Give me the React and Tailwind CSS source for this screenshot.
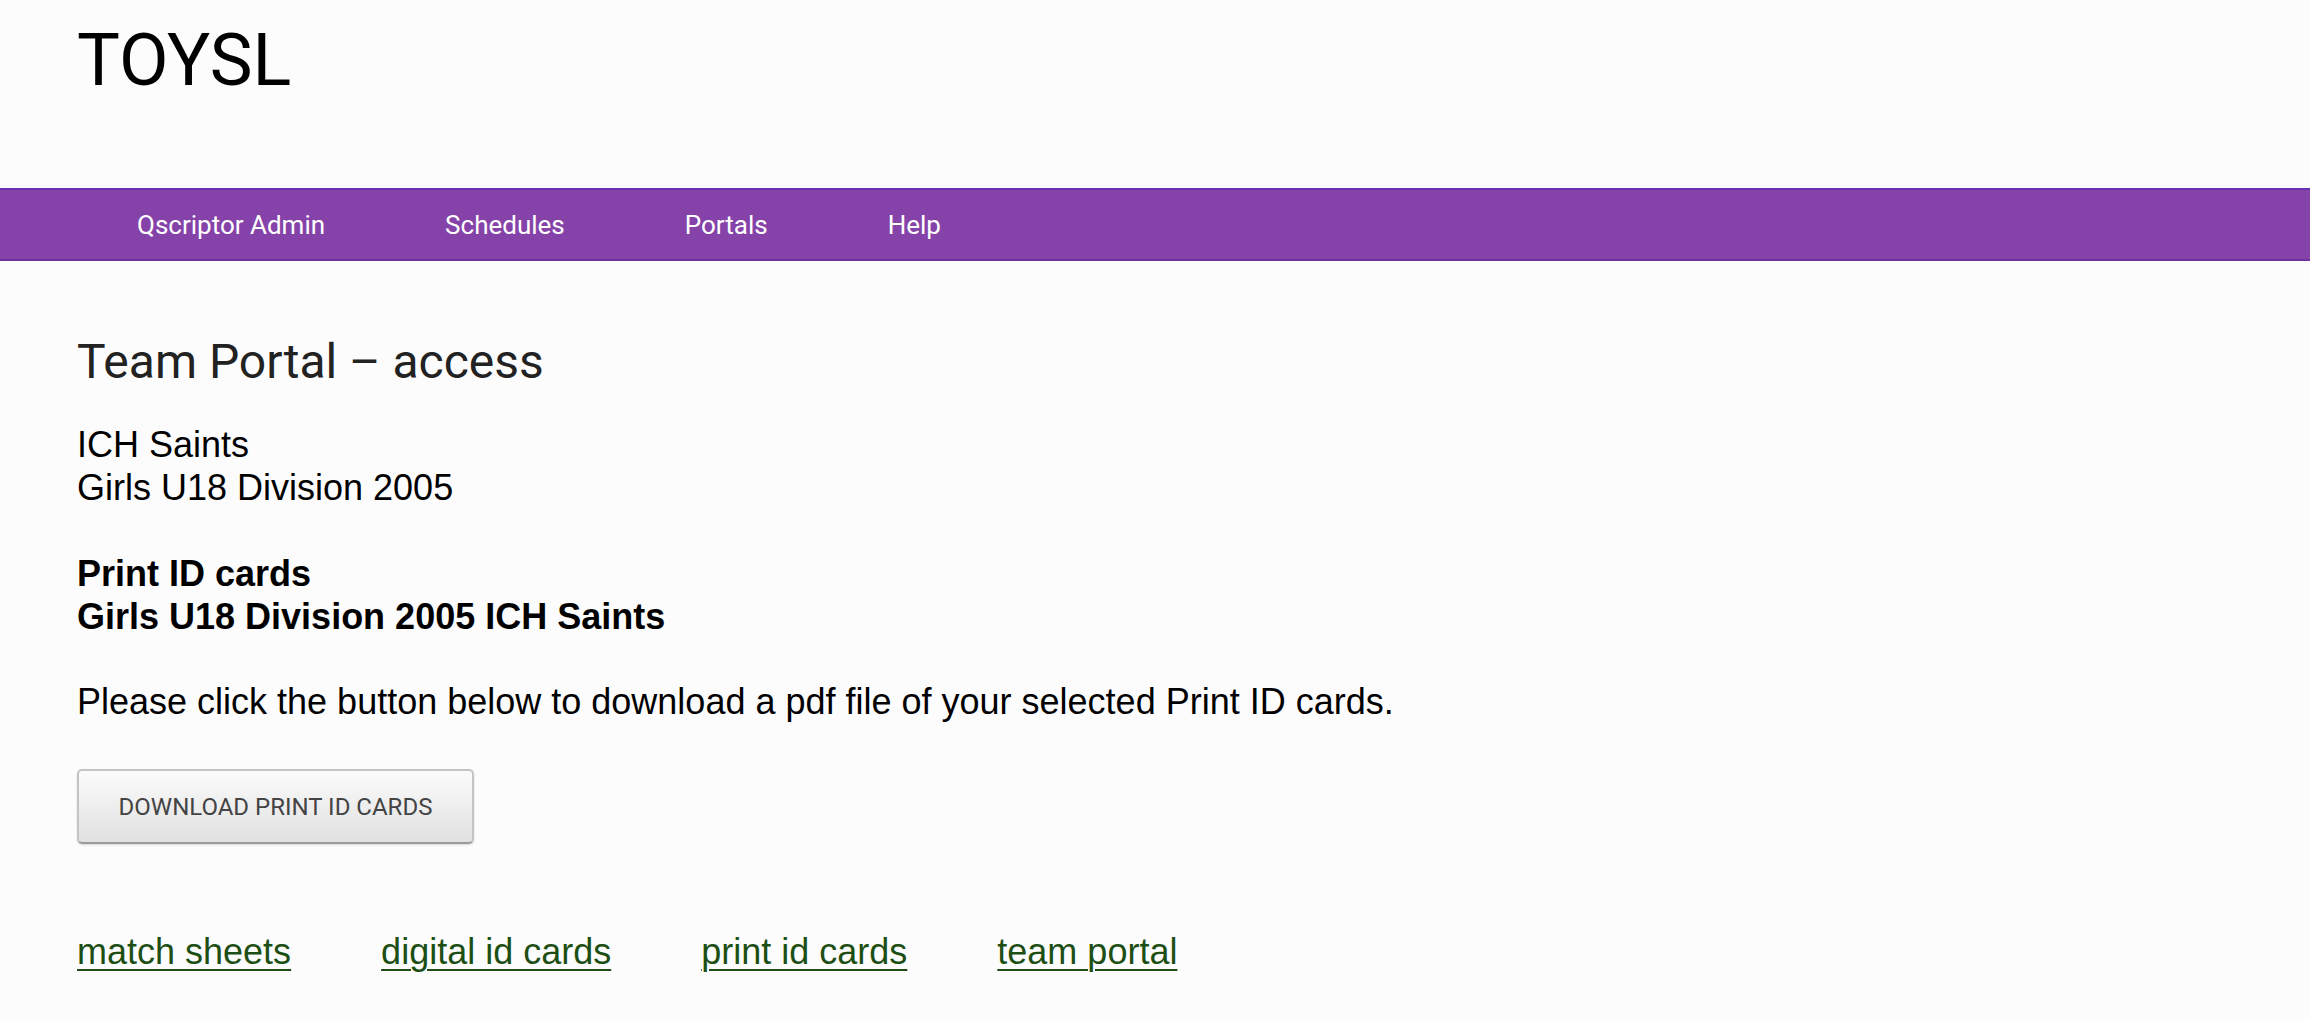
export default function App() {
  const nav = ['Qscriptor Admin', 'Schedules', 'Portals', 'Help'];
  const links = ['match sheets', 'digital id cards', 'print id cards', 'team portal'];

  return (
    <div className="min-h-[1019px] bg-[#fcfcfd] text-black" style={{ fontFamily: '"Liberation Sans", Arial, sans-serif' }}>
      {/* header */}
      <header className="h-[188px] pl-[77px] pt-[25px]">
        <h1 className="font-['Roboto',sans-serif] text-[72px] leading-[72px] font-normal text-black">TOYSL</h1>
      </header>

      {/* nav bar */}
      <nav className="h-[73px] bg-[#8543a9] border-t-2 border-t-[#6a30b4] border-b-2 border-b-[#7131a0] flex items-center pl-[77px]">
        {nav.map(n => (
          <a key={n} href="#" className="px-[60px] font-['Roboto',sans-serif] text-[26px] leading-[30px] text-white">{n}</a>
        ))}
      </nav>

      {/* content */}
      <main className="pl-[77px] pt-[72px]">
        <h2 className="font-['Roboto',sans-serif] text-[48px] leading-[57px] font-normal text-[#222]">Team Portal – access</h2>

        <div className="mt-[33px] text-[36px] leading-[43px]">
          <p>ICH Saints<br />Girls U18 Division 2005</p>
          <p className="mt-[43px] font-bold">Print ID cards<br />Girls U18 Division 2005 ICH Saints</p>
          <p className="mt-[42px]">Please click the button below to download a pdf file of your selected Print ID cards.</p>
        </div>

        <button className="mt-[46px] w-[397px] h-[75px] rounded-[5px] border-2 border-[#c4c4c4] border-b-[#9a9a9a] bg-gradient-to-b from-[#fbfbfb] to-[#e1e1e1] font-['Roboto',sans-serif] text-[24px] text-[#444] uppercase shadow-[0_1px_2px_rgba(0,0,0,0.15)]">
          Download Print ID cards
        </button>

        <div className="mt-[86px] flex gap-[90px] text-[36px] leading-[43px]">
          {links.map(l => (
            <a key={l} href="#" className="text-[#1d4f14] underline decoration-2 underline-offset-[5px]">{l}</a>
          ))}
        </div>
      </main>
    </div>
  );
}
